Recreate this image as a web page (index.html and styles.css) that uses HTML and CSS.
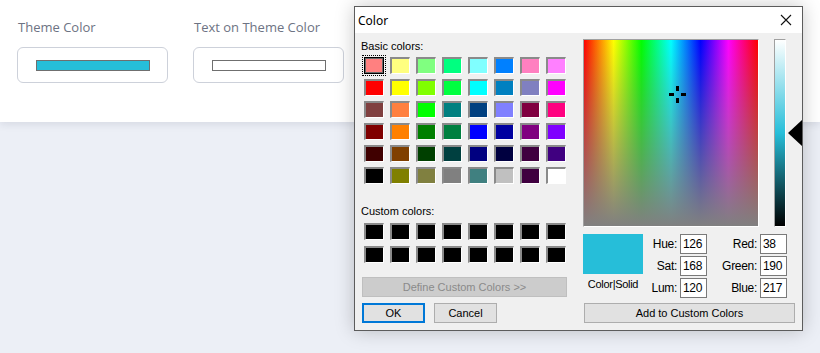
FILE: index.html
```html
<!DOCTYPE html>
<html lang="en">
<head>
  <meta charset="UTF-8" />
  <title>Theme Colors</title>
  <link rel="stylesheet" href="styles.css">
</head>
<body>
  <section class="panel">
    <div class="field">
      <label>Theme Color</label>
      <div class="picker"><span class="bar theme"></span></div>
    </div>
    <div class="field">
      <label>Text on Theme Color</label>
      <div class="picker"><span class="bar text"></span></div>
    </div>
  </section>

  <div class="dialog">
    <div class="titlebar">
      <span class="title">Color</span>
      <svg class="close" width="12" height="12" viewBox="0 0 12 12">
        <path d="M1 1 L11 11 M11 1 L1 11" stroke="#111" stroke-width="1.1" fill="none"/>
      </svg>
    </div>
    <div class="dlg-body">
      <div class="left-col">
        <div class="caption">Basic colors:</div>
        <div class="swatches basic">
          <span class="sw selected" style="background:#ff8080"></span>
          <span class="sw" style="background:#ffff80"></span>
          <span class="sw" style="background:#80ff80"></span>
          <span class="sw" style="background:#00ff80"></span>
          <span class="sw" style="background:#80ffff"></span>
          <span class="sw" style="background:#0080ff"></span>
          <span class="sw" style="background:#ff80c0"></span>
          <span class="sw" style="background:#ff80ff"></span>

          <span class="sw" style="background:#ff0000"></span>
          <span class="sw" style="background:#ffff00"></span>
          <span class="sw" style="background:#80ff00"></span>
          <span class="sw" style="background:#00ff40"></span>
          <span class="sw" style="background:#00ffff"></span>
          <span class="sw" style="background:#0080c0"></span>
          <span class="sw" style="background:#8080c0"></span>
          <span class="sw" style="background:#ff00ff"></span>

          <span class="sw" style="background:#804040"></span>
          <span class="sw" style="background:#ff8040"></span>
          <span class="sw" style="background:#00ff00"></span>
          <span class="sw" style="background:#008080"></span>
          <span class="sw" style="background:#004080"></span>
          <span class="sw" style="background:#8080ff"></span>
          <span class="sw" style="background:#800040"></span>
          <span class="sw" style="background:#ff0080"></span>

          <span class="sw" style="background:#800000"></span>
          <span class="sw" style="background:#ff8000"></span>
          <span class="sw" style="background:#008000"></span>
          <span class="sw" style="background:#008040"></span>
          <span class="sw" style="background:#0000ff"></span>
          <span class="sw" style="background:#0000a0"></span>
          <span class="sw" style="background:#800080"></span>
          <span class="sw" style="background:#8000ff"></span>

          <span class="sw" style="background:#400000"></span>
          <span class="sw" style="background:#804000"></span>
          <span class="sw" style="background:#004000"></span>
          <span class="sw" style="background:#004040"></span>
          <span class="sw" style="background:#000080"></span>
          <span class="sw" style="background:#000040"></span>
          <span class="sw" style="background:#400040"></span>
          <span class="sw" style="background:#400080"></span>

          <span class="sw" style="background:#000000"></span>
          <span class="sw" style="background:#808000"></span>
          <span class="sw" style="background:#808040"></span>
          <span class="sw" style="background:#808080"></span>
          <span class="sw" style="background:#408080"></span>
          <span class="sw" style="background:#c0c0c0"></span>
          <span class="sw" style="background:#400040"></span>
          <span class="sw" style="background:#ffffff"></span>
        </div>

        <div class="caption custom-cap">Custom colors:</div>
        <div class="swatches custom">
          <span class="sw"></span><span class="sw"></span><span class="sw"></span><span class="sw"></span>
          <span class="sw"></span><span class="sw"></span><span class="sw"></span><span class="sw"></span>
          <span class="sw"></span><span class="sw"></span><span class="sw"></span><span class="sw"></span>
          <span class="sw"></span><span class="sw"></span><span class="sw"></span><span class="sw"></span>
        </div>

        <button class="btn define" disabled>Define Custom Colors &gt;&gt;</button>
        <div class="btn-row">
          <button class="btn ok">OK</button>
          <button class="btn">Cancel</button>
        </div>
      </div>

      <div class="right-col">
        <div class="mixer">
          <div class="spectrum">
            <span class="cross"></span>
          </div>
          <div class="lum"></div>
          <div class="lum-arrow"></div>
        </div>

        <div class="values">
          <div class="preview">
            <div class="solid"></div>
            <div class="solid-label">Color|Solid</div>
          </div>
          <div class="inputs hsl">
            <label>Hue:</label><input value="126">
            <label>Sat:</label><input value="168">
            <label>Lum:</label><input value="120">
          </div>
          <div class="inputs rgb">
            <label>Red:</label><input value="38">
            <label>Green:</label><input value="190">
            <label>Blue:</label><input value="217">
          </div>
        </div>

        <button class="btn add">Add to Custom Colors</button>
      </div>
    </div>
  </div>
</body>
</html>
```

FILE: styles.css
```css
* {
  box-sizing: border-box;
  margin: 0;
  padding: 0;
}

body {
  background: #eceff6;
  font-family: "Open Sans", "Liberation Sans", sans-serif;
  width: 820px;
  height: 353px;
  overflow: hidden;
  position: relative;
}

.panel {
  background: #fff;
  height: 122px;
  display: flex;
  gap: 25px;
  padding: 18px 0 0 17px;
  box-shadow: 0 2px 8px rgba(40, 50, 80, 0.12);
}

.field label {
  display: block;
  font-size: 13px;
  color: #6d7383;
  padding-left: 1px;
  height: 29px;
}

.picker {
  width: 151px;
  height: 36px;
  border: 1px solid #cdd1da;
  border-radius: 6px;
  display: flex;
  align-items: center;
  justify-content: center;
}

.bar {
  width: 114px;
  height: 11px;
  border: 1px solid #6f6f6f;
}

.bar.theme {
  background: #26bed9;
}

.bar.text {
  background: #fff;
}

/* windows color dialog */
.dialog {
  position: absolute;
  left: 354px;
  top: 6px;
  width: 449px;
  height: 325px;
  background: #f0f0f0;
  border: 1px solid #5c5c5c;
  box-shadow: 0 0 18px rgba(0, 0, 0, 0.22);
  font-family: "Liberation Sans", Arial, sans-serif;
  font-size: 11px;
  color: #000;
}

.titlebar {
  height: 26px;
  background: #fff;
  display: flex;
  align-items: center;
  justify-content: space-between;
  padding: 0 10px 0 3px;
}

.title {
  font-family: "Noto Sans", "Liberation Sans", sans-serif;
  font-size: 12px;
}

.dlg-body {
  display: flex;
}

.left-col {
  width: 228px;
  padding: 7px 0 0 6px;
}

.caption {
  height: 13px;
  line-height: 13px;
}

.swatches {
  display: grid;
  grid-template-columns: repeat(8, 20px);
  column-gap: 6px;
  margin-left: 3px;
}

.swatches.basic {
  margin-top: 4px;
  grid-auto-rows: 17px;
  row-gap: 5px;
}

.swatches.custom {
  margin-top: 5px;
  grid-auto-rows: 17px;
  row-gap: 6px;
}

.custom-cap {
  margin-top: 21px;
}

.sw {
  display: block;
  background: #000;
  border-style: solid;
  border-width: 2px 1px 1px 2px;
  border-color: #8a8a8a #fff #fff #8a8a8a;
  position: relative;
}

.sw.selected {
  border: 1px solid #000;
  box-shadow: inset 0 0 0 1px #6a6a6a;
}

.sw.selected::after {
  content: "";
  position: absolute;
  left: -3px;
  top: -3px;
  right: -3px;
  bottom: -3px;
  border: 1px dotted #000;
}

.btn {
  font-family: "Liberation Sans", Arial, sans-serif;
  font-size: 11px;
  height: 20px;
  background: #e1e1e1;
  border: 1px solid #adadad;
  color: #000;
}

.define {
  display: block;
  width: 205px;
  margin: 14px 0 0 1px;
  background: #cccccc;
  border-color: #bfbfbf;
  color: #8a8a8a;
}

.btn-row {
  display: flex;
  gap: 9px;
  margin: 6px 0 0 1px;
}

.btn-row .btn {
  width: 63px;
}

.btn.ok {
  border: 2px solid #0078d7;
}

.right-col {
  padding-top: 6px;
}

.mixer {
  display: flex;
  align-items: flex-start;
  height: 188px;
}

.spectrum {
  position: relative;
  width: 176px;
  height: 188px;
  border-style: solid;
  border-width: 1px;
  border-color: #a0a0a0 #fff #fff #a0a0a0;
  background:
    linear-gradient(to bottom, rgba(128, 128, 128, 0), #808080),
    linear-gradient(to right, #f00, #ff0 17%, #0f0 33%, #0ff 50%, #00f 67%, #f0f 83%, #f00);
}

.cross {
  position: absolute;
  left: 85px;
  top: 46px;
  width: 17px;
  height: 17px;
  background:
    linear-gradient(#000, #000) 7px 0 / 3px 5px no-repeat,
    linear-gradient(#000, #000) 7px 12px / 3px 5px no-repeat,
    linear-gradient(#000, #000) 0 7px / 5px 3px no-repeat,
    linear-gradient(#000, #000) 12px 7px / 5px 3px no-repeat;
}

.lum {
  width: 12px;
  height: 188px;
  margin-left: 15px;
  border-style: solid;
  border-width: 1px;
  border-color: #a0a0a0 #fff #fff #a0a0a0;
  background: linear-gradient(to bottom, #fff, #26bed9 50%, #000);
}

.lum-arrow {
  width: 0;
  height: 0;
  margin: 81px 0 0 2px;
  border-top: 13px solid transparent;
  border-bottom: 13px solid transparent;
  border-right: 14px solid #000;
}

.values {
  display: flex;
  margin-top: 7px;
  height: 69px;
}

.preview {
  width: 60px;
}

.solid {
  height: 40px;
  background: #26bed9;
}

.solid-label {
  text-align: center;
  margin-top: 4px;
  font-size: 11px;
  letter-spacing: -0.3px;
}

.inputs {
  display: grid;
  grid-auto-rows: 19px;
  row-gap: 3px;
  align-items: center;
}

.inputs label {
  text-align: right;
  padding-right: 3px;
  font-size: 12px;
  letter-spacing: -0.3px;
}

.inputs input {
  width: 27px;
  height: 20px;
  border: 1px solid #7a7a7a;
  background: #fff;
  font-family: "Liberation Sans", Arial, sans-serif;
  font-size: 12px;
  letter-spacing: -0.3px;
  padding-left: 2px;
  outline: none;
}

.hsl {
  grid-template-columns: 37px 27px;
}

.rgb {
  grid-template-columns: 53px 27px;
}

.add {
  display: block;
  width: 211px;
  margin: 0 0 0 1px;
  background: #e1e1e1;
}
```
